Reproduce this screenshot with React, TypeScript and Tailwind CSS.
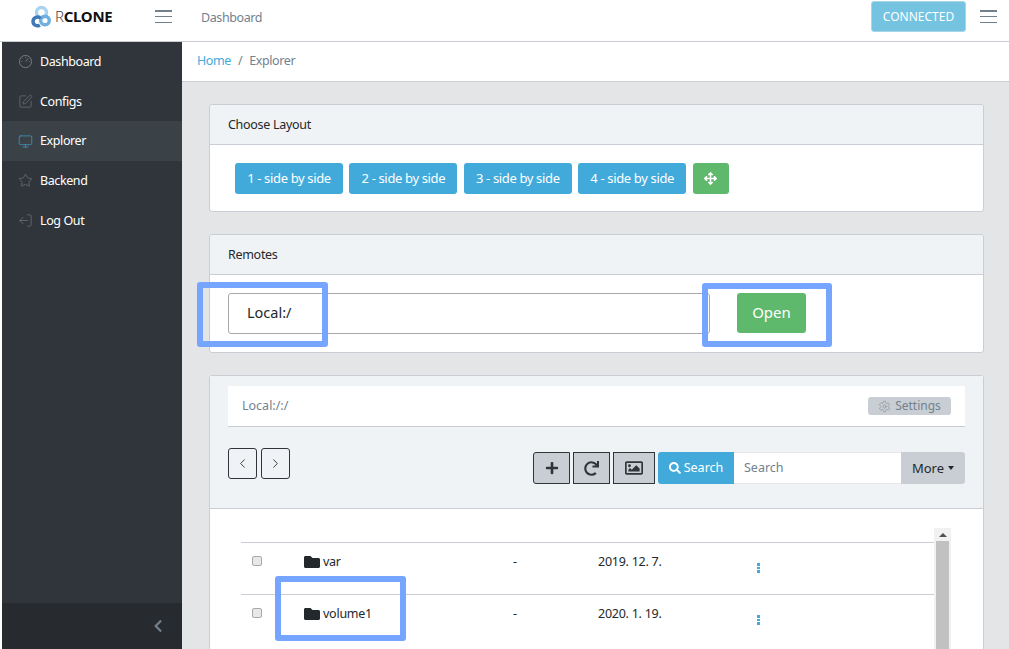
import { ChevronLeft, ChevronRight, LogOut, Monitor, Settings, SquarePen, Star } from "lucide-react";
import type { LucideProps } from "lucide-react";
import { FaArrowsAlt, FaChevronLeft, FaFolder, FaPlus, FaRedo, FaRegImage, FaSearch } from "react-icons/fa";

function Speedometer({ size, className }: LucideProps) {
    return (
        <svg width={size} height={size} viewBox="0 0 16 16" fill="none" stroke="currentColor" strokeWidth="1" className={className}>
            <circle cx="8" cy="8" r="6.5" />
            <path d="M8 8 L11 4.500 M3.500 8 H4.500 M8 3 V4 M11.500 8 H12.500 M4.800 4.800 L5.500 5.500" />
        </svg>
    );
}

function FlippedLogOut(props: LucideProps) {
    return <LogOut {...props} className={`-scale-x-100 ${props.className}`} />;
}

const NAV = [
    { icon: Speedometer, label: "Dashboard" },
    { icon: SquarePen, label: "Configs" },
    { icon: Monitor, label: "Explorer", active: true },
    { icon: Star, label: "Backend" },
    { icon: FlippedLogOut, label: "Log Out" },
];

const FILES = [
    { name: "var", date: "2019. 12. 7." },
    { name: "volume1", date: "2020. 1. 19." },
];

function Hamburger({ className }: { className: string }) {
    return (
        <div className={className}>
            <div className="h-[1.5px] bg-[#73818f]" />
            <div className="h-[1.5px] bg-[#73818f]" />
            <div className="h-[1.5px] bg-[#73818f]" />
        </div>
    );
}

function Logo() {
    return (
        <svg width="20" height="23" viewBox="0 0 20 23" fill="none" strokeWidth="3.4" className="mr-[4px]">
            <circle cx="10.500" cy="7.500" r="5" stroke="#a9d3f0" />
            <circle cx="14" cy="15.500" r="4.300" stroke="#6fb0e0" />
            <path d="M9.500 13.500 C7 10.500 2 12.500 2 16.500 C2 20 6 22 8.800 20" stroke="#3f79b8" />
        </svg>
    );
}

function CardHeader({ title }: { title: string }) {
    return (
        <div className="h-10 bg-[#f0f3f5] border-b border-[#c8ced3] rounded-t-[3px] pl-[18px] pt-[1px] flex items-center text-[12.500px] tracking-[-0.3px] text-[#23282c]">
            {title}
        </div>
    );
}

function LayoutButton({ label }: { label: string }) {
    return (
        <div className="w-[108px] h-[31px] bg-[#42aadb] rounded-[3px] flex items-center justify-center text-white text-[13px] tracking-[-0.35px]">
            {label}
        </div>
    );
}

function ToolButton({ children, w, rounded }: { children: React.ReactNode; w: string; rounded?: boolean }) {
    return (
        <div className={`${w} h-8 bg-[#c8ced3] border border-[#2f353a] flex items-center justify-center text-[#2f353a] ${rounded ? "rounded-l-[3px]" : ""}`}>
            {children}
        </div>
    );
}

function NavButton({ children }: { children: React.ReactNode }) {
    return (
        <div className="w-[29px] h-[31px] border border-[#2f353a] rounded-[3px] flex items-center justify-center text-[#23282c]">
            {children}
        </div>
    );
}

function Highlight({ className }: { className: string }) {
    return <div className={`absolute border-[6px] border-[#75a5ff] rounded-[3px] ${className}`} />;
}

export default function App() {
    return (
        <div className="relative w-[1009px] h-[649px] overflow-hidden bg-white flex flex-col text-[#23282c] font-['Noto_Sans','Open_Sans',sans-serif]">
            {/* top bar */}
            <header className="h-[42px] shrink-0 border-b border-[#c8ced3] flex items-center pb-[8px]">
                <div className="w-[155px] pl-[31px] flex items-center">
                    <Logo />
                    <span className="text-[15px] tracking-[-0.3px] text-[#444] font-light">R</span>
                    <span className="text-[15px] tracking-[-0.3px] font-bold text-[#111]">CLONE</span>
                </div>
                <Hamburger className="w-[17px] h-[13px] flex flex-col justify-between" />
                <span className="ml-[29px] pt-[3px] text-[12.500px] tracking-[-0.4px] text-[#73818f]">Dashboard</span>
                <div className="ml-auto w-[95px] h-[31px] bg-[#73c3e1] border border-[#a9d5e8] rounded-[3px] pt-[1px] flex items-center justify-center text-white text-[12px]">
                    CONNECTED
                </div>
                <Hamburger className="ml-[14px] mr-[12px] w-[17px] h-[13px] flex flex-col justify-between" />
            </header>

            <div className="flex flex-1 min-h-0 pl-[2px]">
                {/* sidebar */}
                <aside className="w-[180px] shrink-0 bg-[#2f353a] flex flex-col text-white text-[12.500px] tracking-[-0.4px]">
                    <nav className="flex-1">
                        {NAV.map((item) => (
                            <div
                                key={item.label}
                                className={`h-[39.700px] flex items-center pl-[16px] gap-[7px] ${item.active ? "bg-[#3a4248]" : ""}`}
                            >
                                <item.icon
                                    size={15}
                                    strokeWidth={1}
                                    className={item.active ? "text-[#42aadb]" : "text-[#73818f]"}
                                />
                                <span className="pt-[1px]">{item.label}</span>
                            </div>
                        ))}
                    </nav>
                    <div className="h-[46px] bg-[#272b2f] flex items-center justify-end pr-[17px]">
                        <FaChevronLeft size={14} className="text-[#73818f]" />
                    </div>
                </aside>

                {/* main column */}
                <main className="flex-1 min-w-0 bg-[#e4e5e6]">
                    <div className="h-10 bg-white border-b border-[#c8ced3] flex items-center pl-[15px] text-[12.500px] tracking-[-0.4px] text-[#73818f]">
                        <span className="text-[#42aadb]">Home</span>
                        <span className="mx-[7px]">/</span>
                        <span>Explorer</span>
                    </div>

                    <div className="pl-[27px] w-[802px] pt-[22px] flex flex-col gap-[22px]">
                        <section className="h-[108px] bg-white border border-[#c8ced3] rounded-[3px]">
                            <CardHeader title="Choose Layout" />
                            <div className="pl-[25px] pt-[18px] flex gap-[6.400px]">
                                <LayoutButton label="1 - side by side" />
                                <LayoutButton label="2 - side by side" />
                                <LayoutButton label="3 - side by side" />
                                <LayoutButton label="4 - side by side" />
                                <div className="w-[36px] h-[31px] bg-[#5fb96d] rounded-[3px] flex items-center justify-center text-white">
                                    <FaArrowsAlt size={13} />
                                </div>
                            </div>
                        </section>

                        <section className="h-[119px] bg-white border border-[#c8ced3] rounded-[3px]">
                            <CardHeader title="Remotes" />
                            <div className="pl-[18px] pt-[18px] flex items-start">
                                <div className="w-[482px] h-[41px] border border-[#a9a9a9] rounded-[3px] flex items-center pl-[18px] pb-[2px] text-[14.500px] text-[#23282c]">
                                    Local:/
                                </div>
                                <div className="ml-[27px] w-[69px] h-[40px] bg-[#5fb96d] rounded-[3px] flex items-center justify-center pb-[1px] text-white text-[15px]">
                                    Open
                                </div>
                            </div>
                        </section>

                        <section className="h-[300px] bg-white border border-[#c8ced3] rounded-[3px]">
                            <div className="h-[133px] bg-[#f0f3f5] border-b border-[#c8ced3] px-[18px] pt-[10px]">
                                <div className="h-[41px] bg-white border-b border-[#c8ced3] flex items-center justify-between pl-[14px] pr-[14px] text-[12.500px] text-[#73818f]">
                                    <span className="pt-[1px]">Local:/:/</span>
                                    <div className="w-[83px] h-[18px] bg-[#c8ced3] rounded-[3px] flex items-center justify-center gap-[4px] text-[12px]">
                                        <Settings size={13} strokeWidth={1} />
                                        <span>Settings</span>
                                    </div>
                                </div>
                                <div className="pt-[21px] flex items-start justify-between">
                                    <div className="flex gap-[4px]">
                                        <NavButton>
                                            <ChevronLeft size={15} strokeWidth={1.4} />
                                        </NavButton>
                                        <NavButton>
                                            <ChevronRight size={15} strokeWidth={1.4} />
                                        </NavButton>
                                    </div>
                                    <div className="mt-[4px] flex items-center">
                                        <div className="flex gap-[3px]">
                                            <ToolButton w="w-[37px]" rounded>
                                                <FaPlus size={14} />
                                            </ToolButton>
                                            <ToolButton w="w-[37px]">
                                                <FaRedo size={15} />
                                            </ToolButton>
                                            <ToolButton w="w-[42px]">
                                                <FaRegImage size={18} />
                                            </ToolButton>
                                        </div>
                                        <div className="ml-[3px] w-[76px] h-8 bg-[#42aadb] rounded-l-[3px] flex items-center justify-center gap-[3px] text-white text-[12.500px]">
                                            <FaSearch size={12} />
                                            <span className="pt-[1px]">Search</span>
                                        </div>
                                        <div className="w-[167px] h-8 bg-white border-y border-[#e4e7ea] flex items-center pl-[10px] pt-[1px] text-[12.500px] text-[#73818f]">
                                            Search
                                        </div>
                                        <div className="w-[64px] h-8 bg-[#c8ced3] rounded-r-[3px] flex items-center justify-center gap-[4px] text-[13px]">
                                            <span className="pt-[1px]">More</span>
                                            <span className="w-0 h-0 border-x-[3.500px] border-x-transparent border-t-[4px] border-t-[#23282c]" />
                                        </div>
                                    </div>
                                </div>
                            </div>

                            <div className="pl-[31px] pt-[19px] flex">
                                <div className="w-[693px] pt-[14px] text-[12.500px] tracking-[-0.25px] text-[#23282c]">
                                    {FILES.map((file) => (
                                        <div key={file.name} className="h-[52px] border-t border-[#c8ced3] flex items-start">
                                            <div className="w-[63px] pl-[11px] pt-[13px]">
                                                <div className="w-[10px] h-[10px] bg-[#e8e8e8] border border-[#a9a9a9] rounded-[2px]" />
                                            </div>
                                            <div className="w-[211px] pt-[10px] flex items-center gap-[3px]">
                                                <FaFolder size={16} className="text-[#23282c]" />
                                                <span>{file.name}</span>
                                            </div>
                                            <div className="w-[83px] pt-[10px] -ml-[2px] mr-[2px]">-</div>
                                            <div className="w-[159px] pt-[10px]">{file.date}</div>
                                            <div className="pt-[20px] flex flex-col gap-[1px]">
                                                <div className="w-[3px] h-[2.500px] bg-[#42aadb]" />
                                                <div className="w-[3px] h-[2.500px] bg-[#42aadb]" />
                                                <div className="w-[3px] h-[2.500px] bg-[#42aadb]" />
                                            </div>
                                        </div>
                                    ))}
                                </div>
                                <div className="w-[17px] h-[122px] bg-[#f1f1f1] px-[2px] flex flex-col">
                                    <div className="h-[13px] flex items-center justify-center">
                                        <span className="w-0 h-0 border-x-[4px] border-x-transparent border-b-[4px] border-b-[#505050]" />
                                    </div>
                                    <div className="flex-1 bg-[#c1c1c1]" />
                                </div>
                            </div>
                        </section>
                    </div>
                </main>
            </div>

            {/* annotation boxes drawn over the screenshot */}
            <Highlight className="left-[197px] top-[282px] w-[131px] h-[65px]" />
            <Highlight className="left-[702px] top-[283px] w-[130px] h-[64px]" />
            <Highlight className="left-[275px] top-[576px] w-[131px] h-[65px]" />
        </div>
    );
}
